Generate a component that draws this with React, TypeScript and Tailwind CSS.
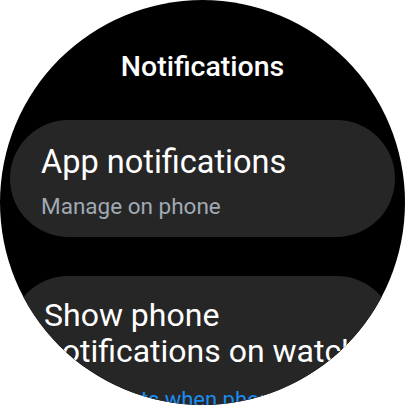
export default function App() {
  return (
    <div className="w-[405px] h-[405px] bg-white" style={{ fontFamily: "Roboto, 'Noto Sans', sans-serif" }}>
      <div className="w-[405px] h-[405px] rounded-full bg-black overflow-hidden flex flex-col">
        <div className="pt-[51px] text-center text-white text-[28.5px] leading-[32px] font-medium">
          Notifications
        </div>
        <div className="mt-[37px] mx-[10px] h-[117px] rounded-full bg-[#262626] pl-[31px] pr-[20px] pt-[24px] flex flex-col shrink-0">
          <div className="text-white text-[32.5px] leading-[36px] whitespace-nowrap">App notifications</div>
          <div className="mt-[12px] text-[#a0aab4] text-[22.5px] leading-[28px] whitespace-nowrap">Manage on phone</div>
        </div>
        <div className="mt-[39px] mx-[10px] rounded-[58px] bg-[#262626] pl-[34px] pr-[20px] pt-[21px] pb-[30px] flex flex-col shrink-0">
          <div className="text-white text-[32px] leading-[36px] whitespace-nowrap">Show phone</div>
          <div className="text-white text-[32px] leading-[36px] whitespace-nowrap">notifications on watch</div>
          <div className="mt-[17px] text-[#1a8cf0] text-[22px] leading-[28px] whitespace-nowrap">Show alerts when phone is in use</div>
        </div>
      </div>
    </div>
  );
}
